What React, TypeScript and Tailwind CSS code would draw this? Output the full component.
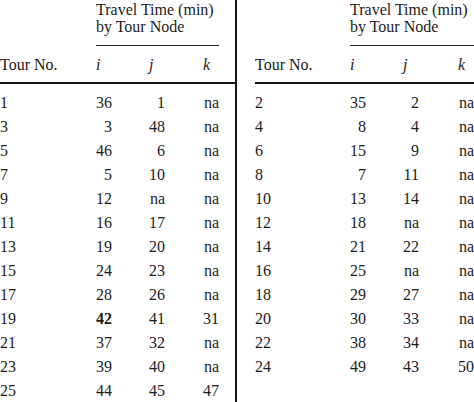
type Row = [string, string, string, string];

const leftRows: Row[] = [
  ["1", "36", "1", "na"],
  ["3", "3", "48", "na"],
  ["5", "46", "6", "na"],
  ["7", "5", "10", "na"],
  ["9", "12", "na", "na"],
  ["11", "16", "17", "na"],
  ["13", "19", "20", "na"],
  ["15", "24", "23", "na"],
  ["17", "28", "26", "na"],
  ["19", "42", "41", "31"],
  ["21", "37", "32", "na"],
  ["23", "39", "40", "na"],
  ["25", "44", "45", "47"],
];

const rightRows: Row[] = [
  ["2", "35", "2", "na"],
  ["4", "8", "4", "na"],
  ["6", "15", "9", "na"],
  ["8", "7", "11", "na"],
  ["10", "13", "14", "na"],
  ["12", "18", "na", "na"],
  ["14", "21", "22", "na"],
  ["16", "25", "na", "na"],
  ["18", "29", "27", "na"],
  ["20", "30", "33", "na"],
  ["22", "38", "34", "na"],
  ["24", "49", "43", "50"],
];

function Cell({ value, bold }: { value: string; bold?: boolean }) {
  return (
    <div className="flex justify-end">
      <span className={`w-[16px] text-right whitespace-nowrap ${bold ? "font-bold" : ""}`}>
        {value}
      </span>
    </div>
  );
}

function HeadCell({ label }: { label: string }) {
  return (
    <div className="flex justify-end">
      <span className="w-[16px] text-left italic">{label}</span>
    </div>
  );
}

function Panel({
  rows,
  cols,
  className,
}: {
  rows: Row[];
  cols: string;
  className: string;
}) {
  return (
    <div className={className}>
      <div className="border-b-2 border-[#151515] pt-[1px] pb-[9px]">
        <div className={`grid ${cols}`}>
          <div className="col-start-2 col-span-3 border-b border-[#222] pb-[10px] leading-[17px]">
            <div className="whitespace-nowrap">Travel Time (min)</div>
            <div className="whitespace-nowrap">by Tour Node</div>
          </div>
        </div>
        <div className={`mt-[10px] grid ${cols} leading-[17px]`}>
          <div className="whitespace-nowrap">Tour No.</div>
          <HeadCell label="i" />
          <HeadCell label="j" />
          <HeadCell label="k" />
        </div>
      </div>
      <div className="pt-[7px]">
        {rows.map((r) => (
          <div key={r[0]} className={`grid ${cols} h-[24px] leading-[24px]`}>
            <div>{r[0]}</div>
            <Cell value={r[1]} bold={r[0] === "19"} />
            <Cell value={r[2]} />
            <Cell value={r[3]} />
          </div>
        ))}
      </div>
    </div>
  );
}

export default function App() {
  return (
    <div
      className="flex h-[402px] w-[474px] overflow-hidden bg-white text-[16px] text-[#1c1c1c]"
      style={{ fontFamily: '"Liberation Serif", "Times New Roman", serif' }}
    >
      <Panel
        rows={leftRows}
        cols="grid-cols-[96px_16px_53px_54px]"
        className="w-[235px] shrink-0"
      />
      <div className="w-[2px] shrink-0 bg-[#151515]" />
      <Panel
        rows={rightRows}
        cols="grid-cols-[95px_16px_53px_55px]"
        className="flex-1 pl-[18px]"
      />
    </div>
  );
}
